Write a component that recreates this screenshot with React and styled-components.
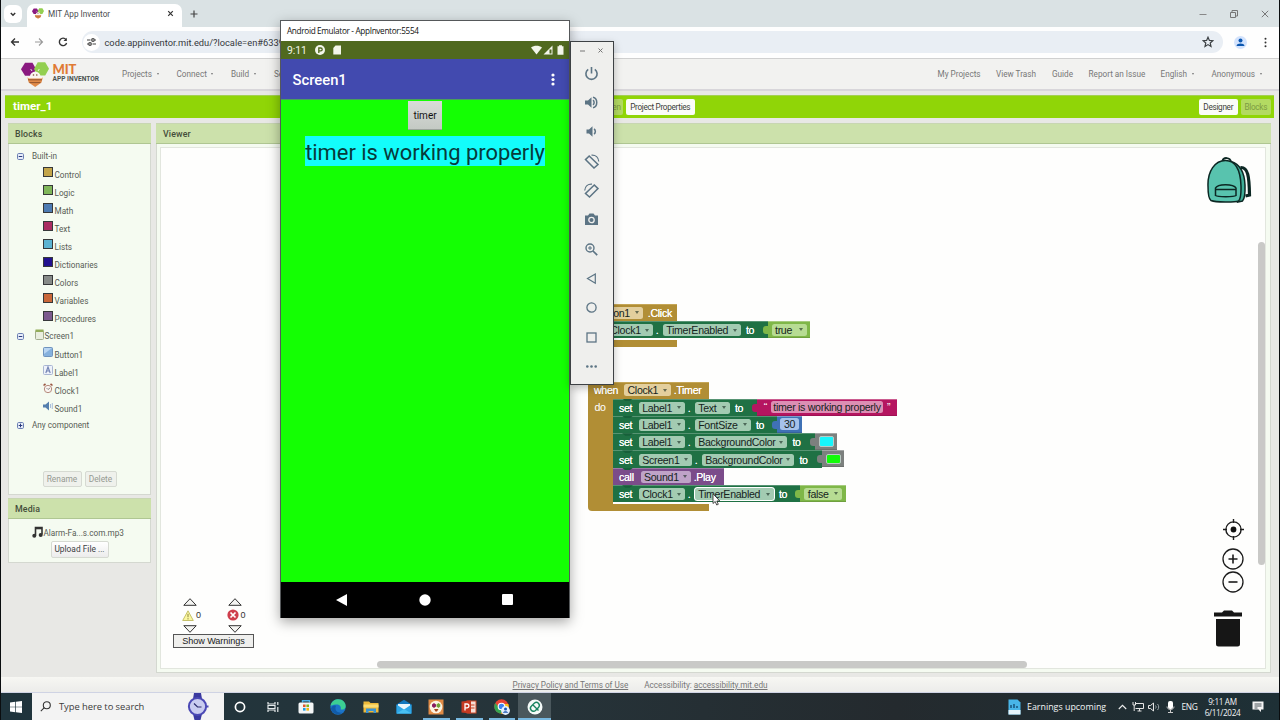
import React from 'react';
import styled, { createGlobalStyle, css } from 'styled-components';

const Global = createGlobalStyle`
  * { box-sizing: border-box; }
  body { margin: 0; background: #000; overflow: hidden; font-family: Roboto, sans-serif; }
  svg { display: block; flex: none; }
`;

const Desktop = styled.div`
  position: relative; width: 1280px; height: 720px; padding: 0 1px;
  display: flex; flex-direction: column; overflow: hidden; background: #0a0d0f;
`;

/* ---------- browser chrome ---------- */
const TabStrip = styled.div`
  height: 27px; flex: none; display: flex; align-items: center; background: #dae2e4; padding: 0 10px 0 3px;
`;
const TabSearch = styled.div`
  width: 18px; height: 18px; border-radius: 6px; background: #fff; display: grid; place-items: center;
`;
const Tab = styled.div`
  align-self: flex-end; width: 155px; height: 23px; margin-left: 4.5px; padding: 0 8px 4px 5px; background: #fff;
  border-radius: 7px 7px 0 0; display: flex; align-items: center; gap: 4.5px; font-size: 8.2px; color: #4a4c4f;
  & > span { flex: 1; }
`;
const NewTab = styled.div`margin-left: 8.5px; flex: 1;`;
const WindowButtons = styled.div`display: flex; gap: 23px; align-items: center;`;

const Toolbar = styled.div`
  height: 31px; flex: none; display: flex; align-items: center; background: #fefefe; padding: 0 11px 1px 8.5px;
`;
const NavIcons = styled.div`display: flex; align-items: center; gap: 14px; width: 72px;`;
const UrlBar = styled.div`
  height: 22px; width: 1141.5px; border-radius: 11px; background: #e9eef4; display: flex; align-items: center;
  padding: 0 9px 0 1px; font-size: 9.3px; color: #36393d;
  & > span { flex: 1; margin-left: 5px; }
`;
const SiteInfo = styled.div`width: 17px; height: 17px; border-radius: 9px; background: #fff; display: grid; place-items: center;`;
const ToolbarEnd = styled.div`display: flex; align-items: center; gap: 17px; margin-left: 11px;`;

/* ---------- App Inventor page ---------- */
const Page = styled.div`flex: 1; display: flex; flex-direction: column; background: #e8e8e5; color: #4d524a; min-height: 0;`;
const SiteHeader = styled.div`
  height: 33px; flex: none; background: #f2f2f0; border-top: 1px solid #d0d0d0; border-bottom: 2px solid #d8d6da;
  display: flex; align-items: center; font-size: 8.2px; color: #777; padding: 0 16.5px 0 19.500px;
`;
const Brand = styled.div`display: flex; align-items: center; gap: 4px; width: 101.5px;`;
const BrandText = styled.div`
  display: flex; flex-direction: column; color: #4d5450; font: 700 6.6px/8px Roboto, sans-serif; white-space: nowrap; padding-bottom: 3px;
  b { font: 900 13px/12px Lato, sans-serif; color: #e07a35; letter-spacing: -0.1px; }
`;
const Menu = styled.span`
  width: ${(p) => p.$w}px; white-space: nowrap;
  ${(p) => p.$caret && css`&::after { content: ''; display: inline-block; margin: 0 0 2px 4.5px; border: 1.6px solid transparent; border-top: 2px solid #777; border-bottom: 0; }`}
`;
const Spacer = styled.div`flex: 1;`;

const ProjectBar = styled.div`
  height: 23px; flex: none; margin: 4px 5px 0 4px; padding: 0 3px 1px 8px; background: #90d507; display: flex;
  align-items: center; gap: 3px; color: #fff; border-top: 1px solid #a3cf52;
  h1 { margin: 0; font: 700 11.6px/20px Roboto, sans-serif; width: 579px; padding-bottom: 1px; }
`;
const BarButton = styled.button`
  height: 16px; padding: 0; width: ${(p) => p.$w}px; border: 0; border-radius: 2px; font: 400 8.2px/14px Roboto, sans-serif;
  letter-spacing: -0.3px; white-space: nowrap;
  background: ${(p) => (p.$off ? '#b3da62' : '#fbfcf8')}; color: ${(p) => (p.$off ? '#7d9a42' : '#3c4038')};
`;

const Columns = styled.div`flex: 1; min-height: 0; display: flex; gap: 5px; padding: 5px 8px 4px 7px;`;
const SideColumn = styled.div`width: 143px; display: flex; flex-direction: column; gap: 3px;`;
const Panel = styled.section`
  background: #f5fbf1; border: 1px solid #d4d8d0; border-top: 0; height: ${(p) => p.$h}px; flex: ${(p) => (p.$grow ? 1 : 'none')};
  display: flex; flex-direction: column; min-width: 0;
`;
const PanelTitle = styled.h2`
  margin: 0 -1px; height: 21px; flex: none; padding: 1px 0 0 7px; background: #cce1ab; border-bottom: 1px solid #afc692; border-top: 1px solid #c8d6b2;
  font: 500 8.8px/18px Roboto, sans-serif; letter-spacing: 0.15px; color: #444d3a;
`;
const Tree = styled.div`padding-top: 3px; height: 326.5px; font-size: 8.2px; color: #575c55;`;
const TreeRow = styled.div`
  height: ${(p) => p.$h || 18}px; display: flex; align-items: center; padding-left: ${(p) => (p.$leaf ? 34 : 8)}px;
  gap: ${(p) => (p.$leaf ? 1.5 : p.$gap || 8)}px; & > svg, & > i { margin-bottom: ${(p) => (p.$leaf ? 4 : 0)}px; }
  & > span { padding-top: ${(p) => (p.$leaf ? 2 : 0)}px; }
`;
const TreeNode = styled.span`display: flex; align-items: center; gap: 1px; & > svg { margin-bottom: 3px; }`;
const Swatch = styled.i`width: 10px; height: 10px; background: ${(p) => p.$c}; border: 1px solid #36383a;`;
const ButtonRow = styled.div`display: flex; justify-content: center; gap: 3px; padding-right: 0;`;
const SmallButton = styled.button`
  width: ${(p) => p.$w}px; height: 16.5px; padding: 0; font: 400 8.4px/14px Roboto, sans-serif; border-radius: 2px; border: 1px solid #d6dad2;
  background: ${(p) => (p.$off ? '#eff1ec' : 'linear-gradient(#fff,#ececec)')}; color: ${(p) => (p.$off ? '#969a92' : '#3d4144')};
`;
const MediaItem = styled.div`display: flex; align-items: center; padding: 6px 0 2px 22.5px; gap: 1px; font-size: 8.2px; color: #575c55; height: 22px;
  & > span { padding-top: 2px; }`;

const Canvas = styled.div`
  position: relative; flex: 1; margin: 3px 4px 3px 3px; background: #fefefd; border: 1px solid #e2e6de; overflow: hidden;
`;
const Pin = styled.div`position: absolute; left: ${(p) => p.$x}px; top: ${(p) => p.$y}px;`;
const ScrollThumb = styled(Pin)`width: ${(p) => p.$w}px; height: ${(p) => p.$h}px; border-radius: 4px; background: #c9c9c7;`;

/* ---------- blocks ---------- */
const Gold = '#b18e35';
const BlockStack = styled(Pin)`
  display: flex; flex-direction: column; font: 400 10.6px/14px 'Liberation Sans', Arial, sans-serif; letter-spacing: -0.3px; color: #fff;
`;
const Hat = styled.div`
  width: ${(p) => p.$w}px; height: 17px; background: ${Gold}; border-radius: 3px 0 0 0; display: flex; align-items: center; padding: 0 0 1px 6px;
  border-top: 1px solid #c5a657;
`;
const Mouth = styled.div`
  display: flex; flex-direction: column; padding-left: 25px; position: relative;
  background: linear-gradient(90deg, ${Gold} 25px, transparent 25px); padding-bottom: 2px;
  & > label { position: absolute; left: 6.5px; top: 1px; }
`;
const Foot = styled.div`width: ${(p) => p.$w}px; height: 7px; background: ${Gold}; border-radius: 0 0 0 4px;`;
const Row = styled.div`height: 17.33px; display: flex; align-items: stretch;`;
const Stmt = styled.div`
  width: ${(p) => p.$w}px; background: ${(p) => p.$c || '#1f7144'}; display: flex; align-items: center; padding-left: 6px;
  border-top: 1px solid rgba(255,255,255,.25); position: relative;
  &::before { content: ''; position: absolute; left: 9px; top: -1px; width: 11px; height: 2.5px; background: #17603a;
    clip-path: polygon(0 0, 100% 0, 70% 100%, 30% 100%); }
`;
const Word = styled.span`width: ${(p) => p.$w}px; white-space: nowrap; text-shadow: 0 0 .4px #fff;`;
const Field = styled.span`
  width: ${(p) => p.$w}px; height: 12px; line-height: 12px; border-radius: 2.5px; background: ${(p) => p.$c || '#a3cbb2'};
  color: #15231c; display: flex; align-items: center; justify-content: space-between; padding: 0 4px 0 3.5px; white-space: nowrap; flex: none;
  ${(p) => p.$on && 'box-shadow: 0 0 0 1px #fff;'}
  ${(p) => p.$plain && 'padding: 0; justify-content: center;'}
  &::after { content: ''; display: ${(p) => (p.$plain ? 'none' : 'block')}; border: 2px solid transparent; border-top: 3px solid rgba(20,40,30,.6); border-bottom: 0; }
`;
const Value = styled.div`
  width: ${(p) => p.$w}px; height: 17px; background: ${(p) => p.$c}; display: flex; align-items: center; justify-content: center; gap: 4px; position: relative;
  border-top: 1px solid rgba(255,255,255,.3); border-bottom: 1px solid rgba(0,0,0,.12);
  &::before { content: ''; position: absolute; left: -5px; top: 4px; width: 5px; height: 8px; border-radius: 3px 0 0 3px; background: ${(p) => p.$c}; }
`;
const ColorChip = styled.i`width: 15px; height: 10.5px; border-radius: 2px; background: ${(p) => p.$c}; border: 1px solid #b9c9c4;`;

/* ---------- warnings ---------- */
const Warnings = styled(Pin)`width: 81px; display: flex; flex-direction: column;`;
const Counters = styled.div`display: flex; gap: 24.5px; padding: 0 0 1px 9px;`;
const Counter = styled.div`width: 20px; display: flex; flex-direction: column; gap: 3px; font: 400 9px/12px 'Liberation Sans', sans-serif; color: #333;
  & > svg { margin-left: 1px; } & > div { display: flex; gap: 2px; align-items: center; height: 13px; }`;
const WarnButton = styled.button`
  height: 14px; padding: 0; border: 1px solid #555; background: #efefed; font: 400 9.1px/12px 'Liberation Sans', sans-serif; color: #222; letter-spacing: -.05px;
`;

const Footer = styled.footer`
  height: 16px; flex: none; background: linear-gradient(#f7f7f3, #ececea); display: flex; justify-content: center; gap: 16px;
  font-size: 8.2px; letter-spacing: -.02px; line-height: 17px; color: #777; border-bottom: 1px solid #cfd3e4;
`;

/* ---------- emulator ---------- */
const Phone = styled.div`
  position: absolute; left: 280px; top: 20px; width: 290px; height: 597.5px; display: flex; flex-direction: column;
  border: 1px solid #55585a; border-width: 1px 1px 0 1px; box-shadow: 0 4px 12px rgba(0,0,0,.35); background: #000;
`;
const PhoneTitle = styled.div`height: 20px; flex: none; background: #fff; padding-left: 6px; font: 400 8.2px/20px 'Open Sans', sans-serif; letter-spacing: -.32px; color: #111;`;
const StatusBar = styled.div`height: 18px; flex: none; background: #50691f; display: flex; align-items: center; padding: 0 5px 0 6px; gap: 8px; color: #f3f6ea; font-size: 10.4px; letter-spacing: -.1px;`;
const AppBar = styled.div`height: 40px; flex: none; background: #424aaf; display: flex; align-items: center; justify-content: space-between; padding: 1px 14px 0 11.5px; color: #fff; font: 500 14.8px/20px Roboto, sans-serif;`;
const Screen = styled.div`flex: 1; background: #14ff03; display: flex; flex-direction: column; align-items: center; border-top: 1px solid #4aa05a;`;
const TimerButton = styled.button`width: 34px; height: 29px; margin-top: 1px; padding: 2px 0 0; border: 0; border-bottom: 1px solid #9aa39a; background: linear-gradient(#d8dbd8,#c4cac4); font: 400 10px/20px Roboto, sans-serif; color: #111;`;
const Message = styled.div`margin-top: 6px; width: 240px; height: 30px; background: #13fdfb; font-size: 21.9px; line-height: 33px; color: #073b3b; text-align: center; white-space: nowrap;`;
const NavBar = styled.div`height: 35.500px; flex: none; background: #000; display: flex; align-items: center; justify-content: space-between; padding: 0 56px 0 55px;`;

const SideTools = styled.div`
  position: absolute; left: 570px; top: 41px; width: 43.5px; height: 343.5px; background: #efefed; border: 1px solid #3d4144; border-right-width: 1.5px;
  display: flex; flex-direction: column; align-items: center; box-shadow: 0 3px 8px rgba(0,0,0,.25); color: #5c7484;
`;
const ToolTitle = styled.div`height: 17px; width: 100%; display: flex; align-items: center; justify-content: space-between; padding: 0 10px 0 9px;`;
const ToolCell = styled.div`height: 29.3px; display: grid; place-items: center;`;
const Pointer = styled.div`position: absolute; left: 712px; top: 493px;`;

/* ---------- taskbar ---------- */
const Taskbar = styled.div`height: 27px; flex: none; background: linear-gradient(90deg,#1f343c,#26343a 40%,#242a2e 70%,#1e3036); display: flex; align-items: center; color: #f2f4f5; font-family: 'Open Sans', sans-serif;`;
const Start = styled.div`width: 31px; display: grid; place-items: center; padding-right: 1px;`;
const Search = styled.div`width: 192px; height: 27px; background: #f3f3f3; color: #3b3b3b; display: flex; align-items: center; padding: 0 15px 0 8px; gap: 8px; font-size: 9.4px; letter-spacing: -.05px;
  & > span { flex: 1; white-space: nowrap; }`;
const TaskIcon = styled.div`
  width: 32.7px; height: 27px; display: grid; place-items: center; background: ${(p) => (p.$active ? '#4a575c' : 'transparent')}; position: relative;
  &::after { content: ''; display: ${(p) => (p.$open ? 'block' : 'none')}; position: absolute; left: ${(p) => (p.$active ? 0 : 3)}px; right: ${(p) => (p.$active ? 0 : 3)}px; bottom: 0; height: 2px; background: #78b8e0; }
`;
const Tray = styled.div`width: 271.500px; margin-left: auto; display: flex; align-items: center; font-size: 8.9px; white-space: nowrap;`;
const TrayItem = styled.div`width: ${(p) => p.$w}px;`;
const Lang = styled.span`font-size: 8.4px; letter-spacing: -.3px;`;
const Clock = styled.div`width: 36px; margin-right: 11px; font-size: 8.2px; line-height: 11px; letter-spacing: -.35px; display: flex; flex-direction: column; align-items: center;`;

/* ---------- drawings ---------- */
const Svg = ({ w, h = w, vb, children, ...r }) => (
  <svg width={w} height={h} viewBox={vb || `0 0 ${w} ${h}`} fill="none" {...r}>{children}</svg>
);
const BeeLogo = ({ w = 28, h = 25 }) => (
  <Svg w={w} h={h} vb="0 0 28 25">
    <path d="M4 .8h7.500l3.800 6.700-3.800 6.200H4L0 7.300Z" fill="#8a1a80" />
    <path d="M16.700.3h7.500L28 6.800l-3.800 6.700h-7.500L13 7Z" fill="#93cf50" />
    <path d="M6.500 15.500h15.300l-1.300 5L14.200 25 7.700 20.500Z" fill="#e08a48" />
    <path d="M7 17.800h14M8.500 20.600h11" stroke="#94552e" strokeWidth="1" />
    <path d="M9 14.500c0-6.500 10.500-6.500 10.500 0 2.500.3 2.500 1.800 1 2H8c-1.500-.2-1.500-1.700 1-2Z" fill="#fbf6f0" />
    <path d="m11 9-1.300-2M17 9l1.300-2" stroke="#fff" strokeWidth=".8" />
    <circle cx="12.500" cy="13" r=".8" fill="#7b4a30" /><circle cx="15.800" cy="13" r=".8" fill="#7b4a30" />
  </Svg>
);
const Toggle = ({ plus }) => (
  <Svg w={7} vb="0 0 7 7"><rect x=".5" y=".5" width="6" height="6" rx="1.200" fill="#e8eefa" stroke="#6c80b4" /><path d={plus ? 'M1.700 3.500h3.600M3.500 1.700v3.600' : 'M1.700 3.500h3.600'} stroke="#2c3c7c" strokeWidth="1" /></Svg>
);
const ScreenIcon = () => <Svg w={9} h={11}><rect x=".5" y="1.500" width="8" height="9" rx="1" fill="#e9eedf" stroke="#a3ae90" /><rect x=".5" y=".5" width="8" height="2.500" fill="#93ad5a" /></Svg>;
const ButtonIcon = () => <Svg w={10}><rect x=".5" y=".5" width="9" height="9" rx="1" fill="#86b1dd" stroke="#6f93bd" /><path d="M1 1h8L1 7Z" fill="#b9d5f2" /></Svg>;
const LabelIcon = () => <Svg w={10}><rect x=".5" y=".5" width="9" height="9" rx="1" fill="#eef2fa" stroke="#a9b6d2" /><path d="m2.800 8 2.200-6 2.200 6M3.500 6h3" stroke="#7586b5" strokeWidth="1.200" /></Svg>;
const AlarmIcon = () => <Svg w={10} h={11}><circle cx="5" cy="6" r="3.700" fill="#faf4f0" stroke="#b58a7c" /><path d="M.5 2.500 2.500.800M9.500 2.500 7.500.800" stroke="#99543f" strokeWidth="1.600" /><path d="M3.500 5 5 6.500 7 5" stroke="#777" strokeWidth=".8" /></Svg>;
const SoundIcon = () => <Svg w={10} h={10}><path d="M0 3.500h2.500L6 .5v9L2.500 6.500H0Z" fill="#557fae" /><path d="M7.500 3v4M9.300 2v6" stroke="#a9bfdb" /></Svg>;

const Backpack = () => (
  <Svg w={46} h={47} stroke="#0c2723" strokeWidth="1.500">
    <path d="M33.500 10.500c7.500-.5 8.700 9 9 27.500l-4 1" strokeWidth="3.200" />
    <path d="M24 4.500c10 3 13.500 12 14 23.500.3 9-.5 14-2.500 16l-5 1Z" fill="#3fae98" />
    <path d="M15.500 4c1-4 7.500-4 8.500 1" strokeWidth="2" />
    <path d="M1 29C.5 14 8 3.500 18.500 3.500S33.500 14 34 29c.2 8 0 13-2.500 15-4 1.500-22.500 1.500-27.500-.5C1.500 42 1 37 1 29Z" fill="#58c3ae" />
    <path d="M8.500 31c2-4.500 18-4.500 20.500 0v7.500c-2 1.500-18.500 1.500-20.500 0ZM8.500 32.500H29" />
  </Svg>
);
const Trash = () => <Svg w={28} h={37}><path fill="#161616" d="M0 2.500h8L10 .500h8l2 2h8V6.500H0ZM2 9h24v25a2.500 2.500 0 0 1-2.500 2.500h-19A2.500 2.500 0 0 1 2 34Z" /></Svg>;
const Zoomer = ({ d }) => <Svg w={22} stroke="#1c1c1c" strokeWidth="1.300"><circle cx="11" cy="11" r="10" /><path d={d} strokeWidth="1.600" /></Svg>;
const Center = () => <Svg w={21} stroke="#1c1c1c" strokeWidth="1.400"><circle cx="10.500" cy="10.500" r="7.600" /><circle cx="10.500" cy="10.500" r="2.900" fill="#111" stroke="none" /><path d="M10.500 0v4M10.500 17v4M0 10.500h4M17 10.500h4" /></Svg>;
const Tri = ({ down }) => <Svg w={14} h={8}><path d={down ? 'M.8.7h12.400L7 7.300Z' : 'M.8 7.300h12.400L7 .7Z'} stroke="#333" fill="#f4f4f2" /></Svg>;

const phoneRotate = <><path d="M5.200 2 14 10.500 10 14 1.500 5.600Z" strokeWidth="1.500" /><path d="M7.500 1.200c4.200-.3 7 2.500 7.300 6.300" strokeWidth="1.200" /></>;
const tools = [
  <><path d="M7.500 1v6.500" strokeWidth="1.600" /><path d="M4.200 3.300a5.600 5.600 0 1 0 6.600 0" strokeWidth="1.600" /></>,
  <><path d="M1 5.500h3l3.500-3.300v10.600L4 9.500H1Z" fill="currentColor" stroke="none" /><path d="M9 5.200c1.500 1 1.500 3.600 0 4.600M9 2.300c5 1.200 5 9.200 0 10.400" strokeWidth="1.500" /></>,
  <><path d="M2.500 5.500H5l3.500-3.300v10.600L5 9.500H2.500Z" fill="currentColor" stroke="none" /><path d="M10 5c1.800 1 1.800 4 0 5" strokeWidth="1.500" /></>,
  phoneRotate,
  <g transform="translate(15.500 0) scale(-1 1)">{phoneRotate}</g>,
  <><path d="M1 3.500h3L5.500 1.500h4L11 3.500h3v9.500H1Z" fill="currentColor" stroke="none" /><circle cx="7.500" cy="8" r="2.700" stroke="#efefed" strokeWidth="1.300" /></>,
  <><circle cx="6" cy="6" r="4" strokeWidth="1.400" /><path d="m9 9 4.200 4.200" strokeWidth="1.700" /><path d="M4 6h4M6 4v4" /></>,
  <path d="M11.300 3v9.200L3.500 7.600Z" strokeWidth="1.200" />,
  <circle cx="7.500" cy="7.500" r="4.600" strokeWidth="1.300" />,
  <rect x="3" y="3" width="9" height="9" strokeWidth="1.300" />,
  <g fill="currentColor" stroke="none"><circle cx="3.300" cy="7.500" r="1.300" /><circle cx="7.500" cy="7.500" r="1.300" /><circle cx="11.700" cy="7.500" r="1.300" /></g>,
];

const drawers = [['Control', '#c3a54a'], ['Logic', '#7fb659'], ['Math', '#4d7bb3'], ['Text', '#aa2c62'], ['Lists', '#5cb3d2'], ['Dictionaries', '#22118f'], ['Colors', '#868a88'], ['Variables', '#c9673a'], ['Procedures', '#7c5a8e']];
const components = [['Button1', ButtonIcon], ['Label1', LabelIcon], ['Clock1', AlarmIcon], ['Sound1', SoundIcon]];

const Setter = ({ w, comp, compW = 46.5, prop, propW, on, children }) => (
  <Row>
    <Stmt $w={w}>
      <Word $w={19.7}>set</Word><Field $w={compW}>{comp}</Field><Word $w={9.5}>&nbsp;.</Word>
      <Field $w={propW} $on={on}>{prop}</Field><Word $w={14}>&nbsp; to</Word>
    </Stmt>
    {children}
  </Row>
);

const BlocksWorkspace = () => (
  <>
    <BlockStack $x={395} $y={156}>
      <Hat $w={121}><Word $w={30}>when</Word><Field $w={50.500} $c="#e3cf9d">Button1</Field><Word $w={30}>&nbsp; .Click</Word></Hat>
      <Mouth><label>do</label>
        <Setter w={187} comp="Clock1" prop="TimerEnabled" propW={78}>
          <Value $w={42} $c="#7fb748"><Field $w={35} $c="#b7dc93">true</Field></Value>
        </Setter>
      </Mouth>
      <Foot $w={121} />
    </BlockStack>

    <BlockStack $x={427} $y={233.500}>
      <Hat $w={121}><Word $w={30}>when</Word><Field $w={47} $c="#e3cf9d">Clock1</Field><Word $w={30}>&nbsp;.Timer</Word></Hat>
      <Mouth><label>do</label>
        <Setter w={144} comp="Label1" prop="Text" propW={35}>
          <Value $w={140} $c="#b51560">“<Field $w={112} $plain $c="#dc8fb4">timer is working properly</Field>”</Value>
        </Setter>
        <Setter w={164} comp="Label1" prop="FontSize" propW={56}>
          <Value $w={25} $c="#3f71b5"><Field $w={18.500} $plain $c="#a6c2ea">30</Field></Value>
        </Setter>
        <Setter w={202} comp="Label1" prop="BackgroundColor" propW={92.500}>
          <Value $w={22} $c="#7c807e"><ColorChip $c="#16f5fb" /></Value>
        </Setter>
        <Setter w={209} comp="Screen1" compW={53.500} prop="BackgroundColor" propW={92.500}>
          <Value $w={22} $c="#7c807e"><ColorChip $c="#12fb08" /></Value>
        </Setter>
        <Row><Stmt $w={110.500} $c="#7b4c8a"><Word $w={21.500}>call</Word><Field $w={50.500} $c="#bfa3c8">Sound1</Field><Word $w={30}>&nbsp;.Play</Word></Stmt></Row>
        <Setter w={187} comp="Clock1" prop="TimerEnabled" propW={79} on>
          <Value $w={46} $c="#7fb748"><Field $w={37.500} $c="#b7dc93">false</Field></Value>
        </Setter>
      </Mouth>
      <Foot $w={121} />
    </BlockStack>
  </>
);

const taskIcons = [
  [<circle cx="8" cy="8" r="4.600" stroke="#fff" strokeWidth="1.700" />],
  [<g stroke="#e5eaec" strokeWidth="1.200"><path d="M3 3v2h7V3M3 13v-2h7v2M3 6.500h7v3H3ZM12.800 3v3M12.800 8v5" /></g>],
  [<><path d="M4.500 3.500V1.700h7v1.800" stroke="#4fb1e8" strokeWidth="1.400" /><rect x=".5" y="3.500" width="15" height="11" rx="1.500" fill="#f4f6f7" /><path d="M5 5.500h2.600v2.600H5Z" fill="#e0562e" /><path d="M8.400 5.500H11v2.600H8.400Z" fill="#7fb51c" /><path d="M5 9h2.600v2.600H5Z" fill="#1f9fe0" /><path d="M8.400 9H11v2.600H8.400Z" fill="#f5b513" /></>],
  [<><circle cx="8" cy="8" r="7.700" fill="#1c75c9" /><path d="M.5 7C1.500 2 5 .300 8.500.300c4.500 0 7.200 3.500 7.200 6.700 0 3-2.500 4-5 3.500 1-3.500-2-5.500-5-5C3 5.800 1 6.500.5 7Z" fill="#3ccf93" /><path d="M6 7c-2 4 1.500 7.500 6.500 6.500C8 17 1.500 14.500 1 9.500 2 7 4 6 6 7Z" fill="#115ba8" /></>],
  [<><path d="M.5 2.500h5.500l1.500 1.500h8v9.500H.5Z" fill="#edb93a" /><path d="M.5 5.500h15v3H.5Z" fill="#fbdc73" /><path d="M3 9.500h10v4.500h-2.500v-2h-5v2H3Z" fill="#3d94d1" /></>],
  [<><path d="M.5 5.500 8 .800l7.500 4.700v9H.5Z" fill="#1377bd" /><path d="M2 5h12v6H2Z" fill="#e9f5fb" /><path d="m.5 5.500 7.500 5 7.500-5v9H.5Z" fill="#2fa6e6" /><path d="m.5 14.500 7.500-4.500 7.500 4.500Z" fill="#49c0f2" /></>],
  [<><rect x=".5" y=".5" width="15" height="15" fill="#e08a45" /><circle cx="8" cy="8" r="6.300" fill="#fbf3e2" /><path d="M4 5.500 6 4l2 1.500v2L6 9 4 7.500Z" fill="#8a1a60" /><path d="m8.500 5.500 2-1.500 1.800 1.500v2L10.500 9l-2-1.500Z" fill="#6fa136" /><path d="M6 10h4.500L9 12.500H7.500Z" fill="#a3471f" /></>, true],
  [<><rect x="6" y="2" width="9" height="12" fill="#f7dfd7" stroke="#d04a28" /><path d="M9 6h4.500M9 9h4.500" stroke="#c7411f" /><path d="M.5 2.500 10 1.500v13L.5 13.500Z" fill="#c53a22" /><path d="M4 11.500V5h2a1.800 1.800 0 0 1 0 3.800H4" stroke="#fff" strokeWidth="1.300" /></>, true],
  [<><circle cx="7.500" cy="7.500" r="7.200" fill="#e94335" /><path d="M1.200 4A7.200 7.200 0 0 0 7 14.700L9.500 9 5 8.500Z" fill="#35a552" /><path d="M14.300 5H8l2.500 4L7 14.700A7.200 7.200 0 0 0 14.300 5Z" fill="#fbc117" /><circle cx="7.500" cy="7.500" r="3.300" fill="#3f83f0" stroke="#fff" strokeWidth="1.100" /><circle cx="11.500" cy="11.500" r="4.400" fill="#e4efff" /><circle cx="11.500" cy="10" r="1.500" fill="#1d58b0" /><path d="M8.700 13.800c.7-2.200 4.900-2.200 5.600 0Z" fill="#1d58b0" /></>, true],
  [<><circle cx="8" cy="8" r="7.500" fill="#f5faf8" /><path d="m4.500 7 3-3a3 3 0 0 1 4.200 4.200L8.500 11.500a3 3 0 0 1-4-4.500ZM6 6l5.500 5.500" stroke="#18835f" strokeWidth="1.400" /></>, true, true],
];

export default function App() {
  return (
    <Desktop>
      <Global />
      <TabStrip>
        <TabSearch><Svg w={8} stroke="#333" strokeWidth="1.500"><path d="m1.800 3 2.200 2.200L6.200 3" /></Svg></TabSearch>
        <Tab><BeeLogo w={12} h={11} /><span>MIT App Inventor</span><Svg w={7} stroke="#333" strokeWidth="1.200"><path d="m1.200 1.200 4.600 4.600M5.800 1.200 1.200 5.800" /></Svg></Tab>
        <NewTab><Svg w={8} stroke="#444" strokeWidth="1.200"><path d="M4 .5v7M.5 4h7" /></Svg></NewTab>
        <WindowButtons>
          <Svg w={8} stroke="#888"><path d="M.5 4.500h7" /></Svg>
          <Svg w={8} stroke="#777"><path d="M.5 2.500h5v5h-5ZM2 2.500v-2h5.500V6h-2" /></Svg>
          <Svg w={8} stroke="#777"><path d="m.8.8 6.400 6.400M7.200.8.8 7.200" /></Svg>
        </WindowButtons>
      </TabStrip>
      <Toolbar>
        <NavIcons>
          <Svg w={10} stroke="#333" strokeWidth="1.300"><path d="M9 5H1.500M5 1.500 1.500 5 5 8.500" /></Svg>
          <Svg w={10} stroke="#999" strokeWidth="1.100"><path d="M1 5h7.500M5 1.500 8.500 5 5 8.500" /></Svg>
          <Svg w={10} stroke="#333" strokeWidth="1.400"><path d="M8 2.600A3.700 3.700 0 1 0 8.600 6" /><path d="M8.800.8v3.300H5.500Z" fill="#333" stroke="none" /></Svg>
        </NavIcons>
        <UrlBar>
          <SiteInfo><Svg w={9} h={8} stroke="#444" strokeWidth="1.200"><path d="M0 2h3.500M5.500 6H9" /><circle cx="6" cy="2" r="1.300" /><path d="M7.500 2H9M0 6h1.500" /><circle cx="3" cy="6" r="1.300" /></Svg></SiteInfo>
          <span>code.appinventor.mit.edu/?locale=en#6339</span>
          <Svg w={12} stroke="#3c4043" strokeWidth="1.200"><path d="m6 1.200 1.400 3.200 3.500.3-2.700 2.300.8 3.400-3-1.800-3 1.800.8-3.400L1.100 4.700l3.500-.3Z" /></Svg>
        </UrlBar>
        <ToolbarEnd>
          <Svg w={13}><circle cx="6.500" cy="6.500" r="6.500" fill="#d3e3fd" /><circle cx="6.500" cy="4.500" r="2" fill="#0b57b0" /><path d="M2.500 10c.5-3.200 7.500-3.200 8 0Z" fill="#0b57b0" /></Svg>
          <Svg w={3} h={11}><g fill="#333"><circle cx="1.500" cy="1.700" r="1" /><circle cx="1.500" cy="5.500" r="1" /><circle cx="1.500" cy="9.300" r="1" /></g></Svg>
        </ToolbarEnd>
      </Toolbar>

      <Page>
        <SiteHeader>
          <Brand><BeeLogo /><BrandText><b>MIT</b>APP INVENTOR</BrandText></Brand>
          <Menu $w={54.500} $caret>Projects</Menu><Menu $w={54.500} $caret>Connect</Menu><Menu $w={43} $caret>Build</Menu><Menu $w={50} $caret>Settings</Menu>
          <Spacer />
          <Menu $w={58.500}>My Projects</Menu><Menu $w={56}>View Trash</Menu><Menu $w={36.500}>Guide</Menu><Menu $w={72}>Report an Issue</Menu><Menu $w={51} $caret>English</Menu><Menu $w={51} $caret>Anonymous</Menu>
        </SiteHeader>
        <ProjectBar>
          <h1>timer_1</h1><BarButton $w={28} $off>Screen</BarButton><BarButton $w={68.500}>Project Properties</BarButton>
          <Spacer /><BarButton $w={38.500}>Designer</BarButton><BarButton $w={30.500} $off>Blocks</BarButton>
        </ProjectBar>
        <Columns>
          <SideColumn>
            <Panel $h={372}>
              <PanelTitle>Blocks</PanelTitle>
              <Tree>
                <TreeRow><Toggle /><span>Built-in</span></TreeRow>
                {drawers.map(([name, c]) => <TreeRow key={name} $leaf><Swatch $c={c} /><span>{name}</span></TreeRow>)}
                <TreeRow $gap={10.500}><Toggle /><TreeNode><ScreenIcon />Screen1</TreeNode></TreeRow>
                {components.map(([name, Icon]) => <TreeRow key={name} $leaf><Icon /><span>{name}</span></TreeRow>)}
                <TreeRow $h={16}><Toggle plus /><span>Any component</span></TreeRow>
              </Tree>
              <ButtonRow><SmallButton $w={39} $off>Rename</SmallButton><SmallButton $w={32} $off>Delete</SmallButton></ButtonRow>
            </Panel>
            <Panel $h={65}>
              <PanelTitle>Media</PanelTitle>
              <MediaItem><Svg w={11} h={12}><path d="M3.500 9.500V1.500h6.500v7" stroke="#333" strokeWidth="1.600" /><path d="M3.500 2.500h6.500" stroke="#333" strokeWidth="1.600" /><circle cx="2.300" cy="9.800" r="2" fill="#333" /><circle cx="8.700" cy="9" r="2" fill="#333" /></Svg><span>Alarm-Fa...s.com.mp3</span></MediaItem>
              <ButtonRow><SmallButton $w={58}>Upload File ...</SmallButton></ButtonRow>
            </Panel>
          </SideColumn>
          <Panel $grow>
            <PanelTitle>Viewer</PanelTitle>
            <Canvas>
              <BlocksWorkspace />
              <Pin $x={1046} $y={9}><Backpack /></Pin>
              <Pin $x={1062} $y={371}><Center /></Pin>
              <Pin $x={1061} $y={400}><Zoomer d="M6.500 11h9M11 6.500v9" /></Pin>
              <Pin $x={1061} $y={423}><Zoomer d="M6.500 11h9" /></Pin>
              <Pin $x={1053} $y={462}><Trash /></Pin>
              <ScrollThumb $x={216} $y={512.500} $w={650} $h={7} />
              <ScrollThumb $x={1097} $y={94} $w={7} $h={323} />
              <Warnings $x={12} $y={449.500}>
                <Counters>
                  <Counter><Tri /><div><Svg w={12} h={11}><path d="M6 .8 11.300 10.500H.7Z" fill="#fbf7a0" stroke="#c5c06a" /><path d="M6 3.800v3.400M6 8.200v1.200" stroke="#8c8640" /></Svg>0</div><Tri down /></Counter>
                  <Counter><Tri /><div><Svg w={12}><circle cx="6" cy="6" r="5.600" fill="#cf3f4d" /><path d="m3.500 3.500 5 5M8.500 3.500l-5 5" stroke="#fff" strokeWidth="1.700" /></Svg>0</div><Tri down /></Counter>
                </Counters>
                <WarnButton>Show Warnings</WarnButton>
              </Warnings>
            </Canvas>
          </Panel>
        </Columns>
        <Footer><u>Privacy Policy and Terms of Use</u><span>Accessibility: <u>accessibility.mit.edu</u></span></Footer>
      </Page>

      <Taskbar>
        <Start><Svg w={12}><path fill="#fff" d="M0 1.600 5.300.8v4.900H0ZM6 .7 12 0v5.700H6ZM0 6.300h5.300v4.900L0 10.400ZM6 6.300h6V12l-6-.8Z" /></Svg></Start>
        <Search>
          <Svg w={11} stroke="#333" strokeWidth="1.100"><circle cx="6.800" cy="4.200" r="3.500" /><path d="M4.300 6.700.8 10.200" /></Svg>
          <span>Type here to search</span>
          <Svg w={22} h={27}><path d="M7 0h7l1 6H6ZM6 21h9l-1.500 6h-6Z" fill="#3a3aa0" /><circle cx="10.500" cy="13.500" r="8.600" fill="#c9ccf0" stroke="#4b49b5" strokeWidth="2" /><path d="m7 10.500 3.500 3.500h4" stroke="#2c2c6c" strokeWidth="1.200" /><path d="M19.500 13.500h2" stroke="#4b49b5" strokeWidth="2" /></Svg>
        </Search>
        {taskIcons.map(([art, open, active], i) => <TaskIcon key={i} $open={open} $active={active}><Svg w={16}>{art}</Svg></TaskIcon>)}
        <Tray>
          <TrayItem $w={19.500}><Svg w={13} h={16}><path d="M.5.5h9l3 3v12H.5Z" fill="#48b5e8" /><path d="M.5 11h12v4.500H.5Z" fill="#e6f4fb" /><path d="M3 9V6M6 9V5M9 9V7" stroke="#17547c" strokeWidth="1.500" /></Svg></TrayItem>
          <TrayItem $w={90.500}>Earnings upcoming</TrayItem>
          <TrayItem $w={14.500}><Svg w={9} h={6} stroke="#eee" strokeWidth="1.100"><path d="m.8 5 3.700-3.700L8.200 5" /></Svg></TrayItem>
          <TrayItem $w={16}><Svg w={12} h={11} stroke="#e5e5e5"><path d="M3.500 2.500h8v5h-8M5.500 10h4M7.500 7.500V10M1 1v3h2.500V1M2.200 4v6" /></Svg></TrayItem>
          <TrayItem $w={17.500}><Svg w={12} h={10} stroke="#e5e5e5"><path d="M.5 3.500h2L5.500 1v8l-3-2.500h-2Z" /><path d="M7.500 3.500c.8.800.8 2.200 0 3M9.500 2c1.600 1.500 1.600 4.500 0 6" stroke="#9aa4a8" /></Svg></TrayItem>
          <TrayItem $w={16}><Svg w={9} h={12}><rect x="2" y="0" width="5" height="8" rx="2" fill="#fff" /><path d="M1 5.500c0 4 7 4 7 0M4.500 8.500V11.500M2 11.500h5" stroke="#ccc" /></Svg></TrayItem>
          <TrayItem $w={23}><Lang>ENG</Lang></TrayItem>
          <Clock><span>9:11 AM</span><span>6/11/2024</span></Clock>
          <Svg w={12}><path d="M.5.5h11v8H9v2.500L6.500 8.500h-6Z" fill="#f4f4f4" /><path d="M2.500 3h7M2.500 5h7M2.500 7h3" stroke="#354147" strokeWidth=".9" /></Svg>
        </Tray>
      </Taskbar>

      <Phone>
        <PhoneTitle>Android Emulator - AppInventor:5554</PhoneTitle>
        <StatusBar>
          <span>9:11</span>
          <Svg w={10}><circle cx="5" cy="5" r="5" fill="#f3f6ea" /><path d="M3.800 8V3h2a1.300 1.300 0 0 1 0 2.800H4" stroke="#50691f" strokeWidth="1.300" /></Svg>
          <Svg w={8} h={10}><path d="M2.500.5H8v9H.3V3Z" fill="#f3f6ea" /></Svg>
          <Spacer />
          <Svg w={33} h={10}><path d="M0 2.500C3 0 8 0 11 2.500L5.500 9.500Z" fill="#f3f6ea" /><path d="M12.500 9.500 21.500.5v9Z" fill="#f3f6ea" /><path d="M18.500 4.500h2v4h-2Z" fill="#50691f" /><path d="M26.500 1.300h1.500V.3h3v1h1.500v8.400h-6Z" fill="#f3f6ea" /></Svg>
        </StatusBar>
        <AppBar><span>Screen1</span><Svg w={4} h={13}><g fill="#fff"><circle cx="2" cy="2" r="1.600" /><circle cx="2" cy="6.500" r="1.600" /><circle cx="2" cy="11" r="1.600" /></g></Svg></AppBar>
        <Screen><TimerButton>timer</TimerButton><Message>timer is working properly</Message></Screen>
        <NavBar>
          <Svg w={11} h={12}><path d="M11 0v12L0 6Z" fill="#fff" /></Svg>
          <Svg w={12}><circle cx="6" cy="6" r="5.700" fill="#fff" /></Svg>
          <Svg w={11}><rect width="11" height="11" rx="1" fill="#fff" /></Svg>
        </NavBar>
      </Phone>

      <SideTools>
        <ToolTitle><Svg w={5} stroke="#777"><path d="M0 3h5" /></Svg><Svg w={5} stroke="#777"><path d="m.5.5 4 4M4.500.5l-4 4" /></Svg></ToolTitle>
        {tools.map((art, i) => <ToolCell key={i}><Svg w={15.500} vb="0 0 15.500 15.500" stroke="currentColor">{art}</Svg></ToolCell>)}
      </SideTools>

      <Pointer><Svg w={9} h={13}><path d="M1 .8v9.700l2.200-2 1.500 3.500 1.600-.7-1.500-3.300h3Z" fill="#fff" stroke="#222" strokeWidth=".8" /></Svg></Pointer>
    </Desktop>
  );
}
